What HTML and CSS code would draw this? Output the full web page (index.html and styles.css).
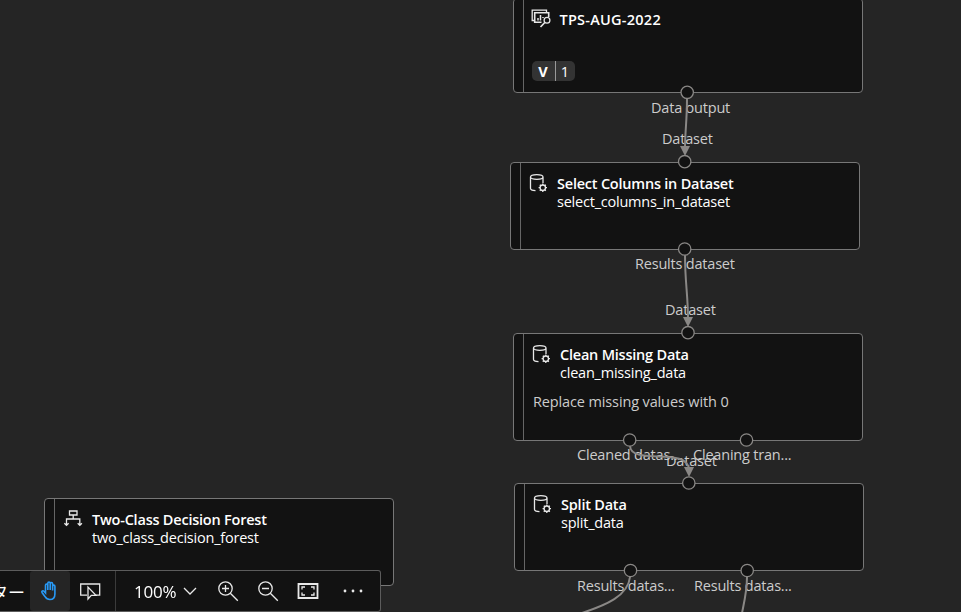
FILE: index.html
```html
<!DOCTYPE html>
<html lang="en">
<head>
    <meta charset="UTF-8">
    <meta name="viewport" content="width=device-width, initial-scale=1.0">
    <title>Pipeline Designer</title>
    <link rel="stylesheet" href="styles.css">
</head>
<body>
    <svg class="symbols" width="0" height="0">
        <symbol id="icon-data" viewBox="0 0 20 20">
            <path d="M2.500 4v11.500c0 1.200 2 2 5 2.200M2.500 4c0-1.300 2.700-2.300 6.300-2.300S15 2.700 15 4s-2.600 2.300-6.200 2.300S2.500 5.300 2.500 4zM15 4v6"/>
            <circle cx="14.800" cy="14.700" r="2.700"/>
            <path d="M14.800 10.500v1.500M14.800 17.400v1.500M10.600 14.700h1.500M17.500 14.700H19M11.800 11.700l1.100 1.100M16.700 16.600l1.100 1.100M17.800 11.700l-1.100 1.100M12.900 16.600l-1.100 1.100"/>
        </symbol>
    </svg>

    <div class="canvas">
        <div class="node node-tps">
            <svg class="icon" viewBox="0 0 20 20">
                <path d="M3 11.500H1.200V1.200h14.300v2"/>
                <path d="M10.500 13.200H3.700V3.700h14V8" stroke-width="1.600"/>
                <path d="M7 11.500V9M9.500 11.500V6M12 9V8" stroke-width="1.500"/>
                <circle cx="16" cy="11.300" r="2.900"/>
                <path d="M13.800 13.500L9.500 18" stroke-width="1.700"/>
            </svg>
            <div class="info">
                <div class="title">TPS-AUG-2022</div>
                <div class="version"><b>V</b><span>1</span></div>
            </div>
        </div>
        <div class="node node-select">
            <svg class="icon"><use href="#icon-data"/></svg>
            <div class="info">
                <div class="title">Select Columns in Dataset</div>
                <div class="name">select_columns_in_dataset</div>
            </div>
        </div>
        <div class="node node-clean">
            <svg class="icon"><use href="#icon-data"/></svg>
            <div class="info">
                <div class="title">Clean Missing Data</div>
                <div class="name">clean_missing_data</div>
                <div class="comment">Replace missing values with 0</div>
            </div>
        </div>
        <div class="node node-split">
            <svg class="icon"><use href="#icon-data"/></svg>
            <div class="info">
                <div class="title">Split Data</div>
                <div class="name">split_data</div>
            </div>
        </div>
        <div class="node node-forest">
            <svg class="icon" viewBox="0 0 20 20">
                <path d="M6.500 2h7.500v4H6.500zM10.200 6v4M3.500 16v-6h13.300v6M1.400 14.200l2.100 2.200 2.100-2.200M14.700 14.200l2.100 2.200 2.100-2.200"/>
            </svg>
            <div class="info">
                <div class="title">Two-Class Decision Forest</div>
                <div class="name">two_class_decision_forest</div>
            </div>
        </div>

        <div class="port-label data-output">Data output</div>
        <div class="port-label select-in">Dataset</div>
        <div class="port-label select-out">Results dataset</div>
        <div class="port-label clean-in">Dataset</div>
        <div class="port-label clean-out-1">Cleaned datas...</div>
        <div class="port-label clean-out-2">Cleaning tran...</div>
        <div class="port-label split-in">Dataset</div>
        <div class="port-label split-out-1">Results datas...</div>
        <div class="port-label split-out-2">Results datas...</div>

        <svg class="edges" width="961" height="612">
            <g class="lines">
                <path d="M687 98C687 122 685 130 685 150"/>
                <path d="M685 255C685 283 688 294 688 320"/>
                <path d="M630 446C631 466 689 446 689 470"/>
                <path d="M630 577C628 596 606 605 582 613"/>
                <path d="M747 577C747 591 744 603 742 613"/>
            </g>
            <g class="arrows">
                <path d="M680 146h10l-5 10z"/>
                <path d="M683 317h10l-5 10z"/>
                <path d="M684 467h10l-5 10z"/>
            </g>
            <g class="ports">
                <circle cx="687.200" cy="92.300" r="6.200"/>
                <circle cx="684.700" cy="161.700" r="6.200"/>
                <circle cx="684.700" cy="249" r="6.200"/>
                <circle cx="688" cy="332.700" r="6.200"/>
                <circle cx="629.700" cy="440" r="6.200"/>
                <circle cx="746.500" cy="440" r="6.200"/>
                <circle cx="688.800" cy="483" r="6.200"/>
                <circle cx="630.500" cy="570.500" r="6.200"/>
                <circle cx="747.200" cy="570.500" r="6.200"/>
            </g>
        </svg>
    </div>

    <div class="toolbar">
        <div class="tool tool-text"><span>ター</span></div>
        <div class="tool active">
            <svg width="20" height="22" viewBox="0 0 20 22">
                <path d="M5.500 13V5.200c0-1.700 2.300-1.700 2.300 0V10 3.300c0-1.700 2.400-1.700 2.400 0V10 3.800c0-1.700 2.400-1.700 2.400 0V10.500 6.300c0-1.600 2.300-1.600 2.300 0V14c0 3.500-1.700 5.500-5 5.500-2.300 0-3.700-.9-4.800-2.800L2 12.500c-.7-1.300 1-2.200 1.900-1.300z"/>
            </svg>
        </div>
        <div class="tool">
            <svg width="22" height="20" viewBox="0 0 22 20">
                <path d="M8 14.200H1.700V3h19v11.200H17"/>
                <path d="M9 6v12l3.300-3.600H17z"/>
            </svg>
        </div>
        <div class="zoom-level">
            <span>100%</span>
            <svg width="14" height="8" viewBox="0 0 14 8"><path d="M1 1l6 6 6-6"/></svg>
        </div>
        <div class="tool">
            <svg width="22" height="22" viewBox="0 0 22 22">
                <circle cx="8.500" cy="8.500" r="6.700"/>
                <path d="M13.300 13.300l7.500 7.500M5 8.500h7M8.500 5v7"/>
            </svg>
        </div>
        <div class="tool">
            <svg width="22" height="22" viewBox="0 0 22 22">
                <circle cx="8.500" cy="8.500" r="6.700"/>
                <path d="M13.300 13.300l7.500 7.500M5 8.500h7"/>
            </svg>
        </div>
        <div class="tool">
            <svg width="22" height="18" viewBox="0 0 22 18">
                <path d="M1.500 2h19v14h-19z" stroke-width="1.800"/>
                <path d="M5 7.500V5h3M14 5h3v2.500M17 10.500V13h-3M8 13H5v-2.500"/>
            </svg>
        </div>
        <div class="tool more">
            <svg width="20" height="4" viewBox="0 0 20 4">
                <circle cx="2" cy="2" r="1.400"/>
                <circle cx="10" cy="2" r="1.400"/>
                <circle cx="18" cy="2" r="1.400"/>
            </svg>
        </div>
    </div>
</body>
</html>
```

FILE: styles.css
```css
body {
    margin: 0;
    background-color: #252525;
    color: #fff;
    font-family: "Open Sans", "Noto Sans CJK JP", sans-serif;
    font-size: 14.5px;
    overflow: hidden;
}

svg {
    fill: none;
    stroke: #e8e8e8;
    stroke-width: 1.3;
}

.symbols {
    position: absolute;
}

.canvas {
    position: relative;
    width: 961px;
    height: 612px;
    overflow: hidden;
}

/* nodes */
.node {
    position: absolute;
    box-sizing: border-box;
    width: 350px;
    height: 88px;
    display: flex;
    padding: 12px 0 0 17px;
    background-color: #121212;
    border: 1px solid #777;
    border-radius: 4px;
}

.node::before {
    content: "";
    position: absolute;
    left: 9px;
    top: 0;
    bottom: 0;
    width: 1px;
    background-color: #666;
}

.node-tps { left: 512.5px; top: -2px; height: 95px; }
.node-select { left: 510px; top: 162px; }
.node-clean { left: 513px; top: 333px; height: 108px; }
.node-split { left: 514px; top: 483px; }
.node-forest { left: 44px; top: 498px; padding-left: 18px; }

.icon {
    flex: none;
    width: 20px;
    height: 20px;
    margin: -2px 9px 0 0;
}

.title, .name {
    height: 18px;
    line-height: 18px;
    letter-spacing: -0.22px;
    white-space: nowrap;
}

.title {
    font-weight: 600;
}

.node-tps .title {
    letter-spacing: 0.25px;
}

.comment {
    margin: 10px 0 0 -27px;
    line-height: 20px;
    color: #ccc;
    letter-spacing: -0.13px;
}

.version {
    display: flex;
    width: 43px;
    height: 20px;
    margin: 32px 0 0 -28px;
    line-height: 21px;
    text-align: center;
    background-color: #333;
    border-radius: 5px;
}

.version b {
    width: 23px;
    border-right: 1px solid #999;
}

.version span {
    flex: 1;
}

/* ports and edges */
.port-label {
    position: absolute;
    line-height: 20px;
    color: #ccc;
    letter-spacing: -0.2px;
    white-space: nowrap;
}

.data-output { left: 651px; top: 98px; }
.select-in { left: 662px; top: 129px; }
.select-out { left: 635px; top: 254px; }
.clean-in { left: 665px; top: 300px; }
.clean-out-1 { left: 577px; top: 445px; }
.clean-out-2 { left: 693px; top: 445px; }
.split-in { left: 666px; top: 451px; }
.split-out-1 { left: 577px; top: 576px; }
.split-out-2 { left: 694px; top: 576px; }

.edges {
    position: absolute;
    left: 0;
    top: 0;
}

.lines {
    stroke: #8a8886;
    stroke-width: 2;
}

.arrows {
    fill: #8a8886;
    stroke: none;
}

.ports {
    fill: #121212;
    stroke: #8a8886;
    stroke-width: 1.3;
}

/* bottom toolbar */
.toolbar {
    position: fixed;
    left: 0;
    bottom: 0;
    box-sizing: border-box;
    display: flex;
    width: 381px;
    height: 42px;
    background-color: #121212;
    border: 1px solid #5c5c5c;
    border-left: none;
    border-radius: 0 3px 3px 0;
}

.tool {
    width: 40px;
    display: flex;
    align-items: center;
    justify-content: center;
}

.tool-text {
    width: 30px;
    justify-content: flex-end;
    overflow: hidden;
    font-size: 17px;
}

.tool-text span {
    flex: none;
    margin-right: 5px;
}

.active {
    background-color: #252525;
    border-radius: 3px;
}

.active svg {
    stroke: #2899f5;
    stroke-width: 1.6;
}

.zoom-level {
    display: flex;
    align-items: center;
    box-sizing: border-box;
    width: 93px;
    margin-left: 5px;
    padding-left: 18px;
    gap: 7px;
    border-left: 1px solid #3b3b3b;
    font-size: 17px;
    letter-spacing: -0.2px;
}

.more {
    width: 50px;
}

.more svg {
    fill: #e8e8e8;
    stroke: none;
}
```
